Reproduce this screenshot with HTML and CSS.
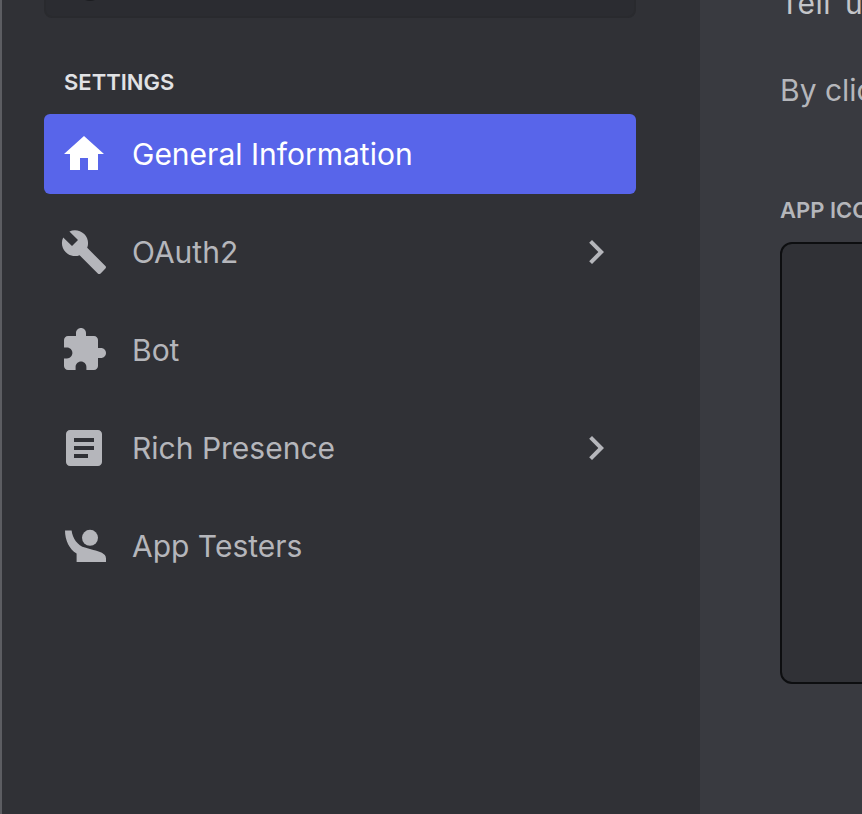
FILE: index.html
```html
<!DOCTYPE html>
<html lang="en">
<head>
<meta charset="utf-8">
<title>General Information</title>
<link rel="stylesheet" href="styles.css">
</head>
<body>
<div class="app">
  <aside class="sidebar">
    <div class="app-card"><span class="app-avatar"></span></div>
    <h2 class="section-title">SETTINGS</h2>
    <nav class="nav">
      <a class="nav-item active">
        <svg class="icon" viewBox="0 0 24 24"><path d="M10 20v-6h4v6h5v-8h3L12 3 2 12h3v8z"/></svg>
        <span class="nav-label">General Information</span>
      </a>
      <a class="nav-item">
        <svg class="icon" viewBox="0 0 24 24"><path d="M22.7 19l-9.1-9.1c.9-2.3.4-5-1.5-6.9-2-2-5-2.4-7.4-1.3L9 6 6 9 1.6 4.7C.4 7.1.9 10.1 2.9 12.1c1.9 1.9 4.6 2.4 6.9 1.5l9.1 9.1c.4.4 1 .4 1.4 0l2.3-2.3c.5-.4.5-1.1.1-1.4z"/></svg>
        <span class="nav-label">OAuth2</span>
        <svg class="icon" viewBox="0 0 24 24"><path d="M10 6L8.59 7.41 13.17 12l-4.58 4.59L10 18l6-6z"/></svg>
      </a>
      <a class="nav-item">
        <svg class="icon" viewBox="0 0 24 24"><path d="M20.5 11H19V7c0-1.1-.9-2-2-2h-4V3.5C13 2.12 11.88 1 10.5 1S8 2.12 8 3.5V5H4c-1.1 0-1.99.9-1.99 2v3.8H3.5c1.49 0 2.7 1.21 2.7 2.7s-1.21 2.7-2.7 2.7H2V20c0 1.1.9 2 2 2h3.8v-1.5c0-1.49 1.21-2.7 2.7-2.7 1.49 0 2.7 1.21 2.7 2.7V22H17c1.1 0 2-.9 2-2v-4h1.5c1.38 0 2.5-1.12 2.5-2.5S21.88 11 20.5 11z"/></svg>
        <span class="nav-label">Bot</span>
      </a>
      <a class="nav-item">
        <svg class="icon" viewBox="0 0 24 24"><path d="M19 3H5c-1.1 0-2 .9-2 2v14c0 1.1.9 2 2 2h14c1.1 0 2-.9 2-2V5c0-1.1-.9-2-2-2zm-5 14H7v-2h7v2zm3-4H7v-2h10v2zm0-4H7V7h10v2z"/></svg>
        <span class="nav-label">Rich Presence</span>
        <svg class="icon" viewBox="0 0 24 24"><path d="M10 6L8.59 7.41 13.17 12l-4.58 4.59L10 18l6-6z"/></svg>
      </a>
      <a class="nav-item">
        <svg class="icon" viewBox="0 0 24 24"><circle cx="15" cy="7.9" r="4"/><path d="M2.5 4.2H5.8C6.2 8 8.8 11.7 12.5 12.8c1.3.4 2.8.8 4.2 1.2 3 .8 6.3 1.6 6.3 4.2V20H8.3v-4.2C4.6 13.4 2.5 9 2.5 4.2z"/></svg>
        <span class="nav-label">App Testers</span>
      </a>
    </nav>
  </aside>
  <main class="content">
    <p class="intro">Tell us a little bit about your application</p>
    <p class="terms">By clicking Create, you agree to the Developer Terms of Service</p>
    <h3 class="field-title">APP ICON</h3>
    <div class="icon-upload"></div>
  </main>
</div>
</body>
</html>
```
FILE: styles.css
```css
html, body {
  margin: 0;
  height: 100%;
  overflow: hidden;
  background: #393a40;
}

.app {
  display: flex;
  width: 862px;
  height: 814px;
  overflow: hidden;
  font-family: Inter, "Noto Sans", sans-serif;
  border-left: 2px solid #5c5d62;
  box-sizing: border-box;
}

.sidebar {
  flex: 0 0 698px;
  box-sizing: border-box;
  padding: 0 64px 0 42px;
  background: #303136;
}

.app-card {
  position: relative;
  height: 78px;
  margin-top: -60px;
  box-sizing: border-box;
  background: #2b2c31;
  border: 2px solid #292a2e;
  border-radius: 8px;
}

.app-avatar {
  position: absolute;
  left: 32px;
  bottom: 15px;
  width: 24px;
  height: 24px;
  border-radius: 50%;
  background: #1c1d20;
}

.section-title {
  margin: 50px 0 0 20px;
  height: 28px;
  font-size: 22px;
  line-height: 28px;
  font-weight: 600;
  color: #e1e2e5;
}

.nav {
  display: flex;
  flex-direction: column;
  gap: 18px;
  margin-top: 18px;
}

.nav-item {
  display: flex;
  align-items: center;
  gap: 24px;
  height: 80px;
  padding: 0 16px;
  border-radius: 6px;
  color: #b5b6bb;
  fill: #b5b6bb;
}

.nav-item.active {
  background: #5865ea;
  color: #fff;
  fill: #fff;
}

.icon {
  flex: 0 0 48px;
  width: 48px;
  height: 48px;
}

.nav-label {
  flex: 1;
  font-size: 30px;
  line-height: 40px;
  height: 40px;
}

.content {
  flex: 1;
  min-width: 0;
  padding-left: 80px;
}

.intro, .terms {
  margin: 0;
  white-space: nowrap;
  font-size: 30px;
  line-height: 40px;
}

.intro {
  margin-top: -17px;
  color: #c4c5c9;
  letter-spacing: 0.5px;
  word-spacing: 5px;
}

.terms {
  margin-top: 47px;
  color: #b5b6bb;
}

.field-title {
  margin: 86px 0 0;
  white-space: nowrap;
  font-size: 22px;
  line-height: 28px;
  font-weight: 600;
  color: #b5b6bb;
}

.icon-upload {
  width: 400px;
  height: 442px;
  margin-top: 18px;
  box-sizing: border-box;
  background: #303136;
  border: 2px solid #0d0e10;
  border-radius: 12px;
}
```
